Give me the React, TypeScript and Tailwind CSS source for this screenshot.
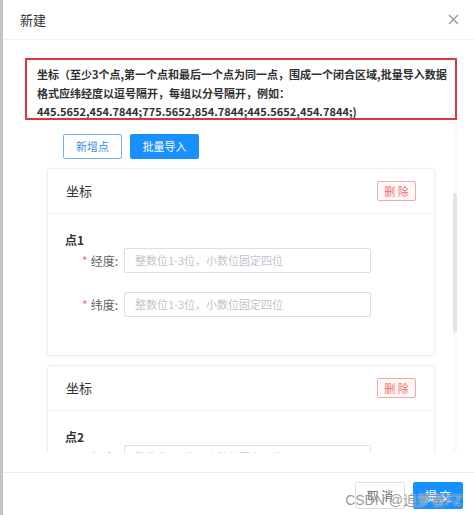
import React from 'react';

const font = { fontFamily: '"Noto Sans CJK SC", "Noto Sans", sans-serif' };

// One coordinate row: required label + input
const Field = ({ label }: { label: string }) => (
  <div className="flex items-center h-[25px]">
    <div className="w-[76px] pr-[6px] text-right text-[12px] text-[#606266]">
      <span className="text-[#f56c6c] mr-[3px]">*</span>
      {label}:
    </div>
    <div className="w-[247px] h-[25px] border border-[#dcdfe6] rounded-[2px] flex items-center px-[10px] text-[11px] text-[#c0c4cc]">
      整数位1-3位，小数位固定四位
    </div>
  </div>
);

const PointCard = ({ index }: { index: number }) => (
  <div className="ml-[22px] w-[388px] mt-[9px] border border-[#ebeef5] rounded-[3px] bg-white shadow-[0_1px_4px_rgba(0,0,0,0.04)]">
    <div className="h-[45px] border-b border-[#ebeef5] flex items-center justify-between pl-[18px] pr-[18px]">
      <span className="text-[13px] text-[#303133]">坐标</span>
      <button className="w-[39px] h-[20px] border border-[#f8a5a5] rounded-[2px] bg-[#fffafa] text-[11px] text-[#f56c6c] leading-none">
        删 除
      </button>
    </div>
    <div className="pt-[18px] pb-[38px]">
      <div className="pl-[17px] h-[16px] leading-[16px] text-[12px] font-bold text-[#303133]">点{index}</div>
      <div className="flex flex-col gap-[19px]">
        <Field label="经度" />
        <Field label="纬度" />
      </div>
    </div>
  </div>
);

const App: React.FC = () => {
  return (
    <div className="w-[474px] h-[515px] flex bg-white overflow-hidden" style={font}>
      <div className="w-[3px] shrink-0 bg-[#c4c4c4]" />
      <div className="flex-1 min-w-0 flex flex-col">
        {/* Header */}
        <div className="h-[40px] shrink-0 border-b border-[#f0f0f0] flex items-center justify-between pl-[17px] pr-[14px]">
          <span className="text-[13px] text-[#303133]">新建</span>
          <svg width="11" height="11" viewBox="0 0 11 11" className="mr-[1px]">
            <path d="M1 1L10 10M10 1L1 10" stroke="#909399" strokeWidth="1.2" />
          </svg>
        </div>

        {/* Body */}
        <div className="flex-1 min-h-0 pl-[22px] pr-[17px] overflow-hidden">
          <div className="mt-[18px] h-[62px] border-2 border-[#e0333b] pl-[10px] pt-[5px] text-[11px] leading-[18.5px] font-bold text-[#303133] whitespace-nowrap overflow-hidden">
            <div>坐标（至少3个点,第一个点和最后一个点为同一点，围成一个闭合区域,批量导入数据</div>
            <div>格式应纬经度以逗号隔开，每组以分号隔开，例如：</div>
            <div>445.5652,454.7844;775.5652,854.7844;445.5652,454.7844;)</div>
          </div>

          <div className="relative h-[333px] overflow-hidden">
            <div className="pt-[14px] pl-[38px] flex gap-[8px]">
              <button className="w-[59px] h-[25px] border border-[#6fb0f5] rounded-[2px] bg-white text-[11px] text-[#3a8ee6]">
                新增点
              </button>
              <button className="w-[69px] h-[25px] rounded-[2px] bg-[#1890ff] text-[11px] text-white">
                批量导入
              </button>
            </div>
            <PointCard index={1} />
            <PointCard index={2} />
            {/* scrollbar */}
            <div className="absolute right-0 top-0 bottom-0 w-[4px] bg-[#fafafa]" />
            <div className="absolute right-0 top-[73px] w-[4px] h-[139px] bg-[#e3e3e3] rounded-[2px]" />
          </div>
        </div>

        {/* Footer */}
        <div className="relative h-[43px] shrink-0 border-t border-[#ebebeb] flex justify-end items-start pt-[9px] pr-[11px] gap-[8px]">
          <button className="w-[50px] h-[27px] border border-[#dcdfe6] rounded-[2px] bg-white text-[12px] text-[#606266]">
            取 消
          </button>
          <button className="w-[50px] h-[27px] rounded-[2px] bg-[#1890ff] text-[12px] text-white">
            提 交
          </button>
          <span className="absolute right-[12px] top-[18px] text-[14px] leading-[18px] text-[rgba(120,120,120,0.75)] [text-shadow:0_0_2px_#fff] pointer-events-none" style={{ fontFamily: '"Liberation Sans", "Noto Sans CJK SC", sans-serif' }}>
            CSDN @追梦者FZ
          </span>
        </div>
      </div>
    </div>
  );
};

export default App;
